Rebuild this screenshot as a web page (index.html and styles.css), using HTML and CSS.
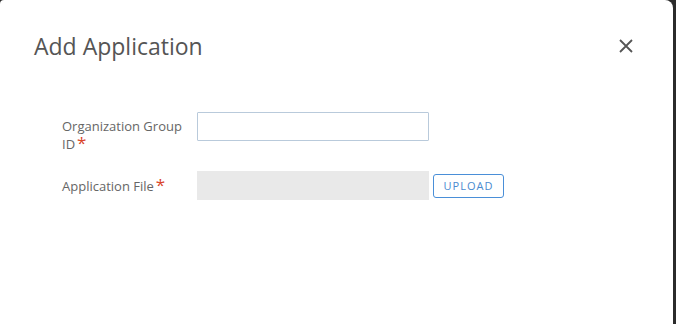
FILE: index.html
```html
<!DOCTYPE html>
<html lang="en">
<head>
    <meta charset="UTF-8">
    <title>Add Application</title>
    <link rel="stylesheet" href="styles.css">
</head>
<body>
    <div class="modal">
        <div class="modal-header">
            <h2>Add Application</h2>
            <button class="close-btn" aria-label="Close">
                <svg width="14" height="14" viewBox="0 0 14 14">
                    <path d="M1 1 L13 13 M13 1 L1 13" stroke="#555" stroke-width="1.8" fill="none"/>
                </svg>
            </button>
        </div>

        <div class="modal-body">
            <div class="form-row">
                <label class="form-label">Organization Group ID<span class="required">*</span></label>
                <input type="text" class="form-input">
            </div>
            <div class="form-row file-row">
                <label class="form-label">Application File<span class="required">*</span></label>
                <div class="file-box"></div>
                <button class="upload-btn">UPLOAD</button>
            </div>
        </div>
    </div>
</body>
</html>
```

FILE: styles.css
```css
body {
    margin: 0;
    background-color: #2b2b2b;
    font-family: 'Open Sans', 'Noto Sans', sans-serif;
}

.modal {
    width: 673px;
    height: 324px;
    background-color: #ffffff;
    border-radius: 4px 8px 0 0;
}

.modal-header {
    display: flex;
    justify-content: space-between;
    align-items: center;
    padding: 31px 40px 0 34px;
}

.modal-header h2 {
    margin: 0;
    font-size: 23px;
    font-weight: 400;
    color: #555;
    line-height: 30px;
}

.close-btn {
    background: none;
    border: none;
    padding: 0;
    width: 14px;
    height: 14px;
    display: flex;
    cursor: pointer;
}

.modal-body {
    padding: 51px 0 0 62px;
}

.form-row {
    display: flex;
    align-items: flex-start;
}

.form-label {
    width: 135px;
    font-size: 13px;
    line-height: 18px;
    color: #666;
    padding-top: 5px;
}

.required {
    color: #d9442a;
    font-size: 17px;
    line-height: 12px;
    margin-left: 2px;
}

.form-input {
    width: 232px;
    height: 29px;
    box-sizing: border-box;
    border: 1px solid #b9cadb;
    border-radius: 1px;
    margin: 0;
    padding: 0 8px;
    font-family: inherit;
}

.file-row {
    margin-top: 18px;
    align-items: center;
}

.file-row .form-label {
    padding-top: 0;
}

.file-box {
    width: 232px;
    height: 29px;
    background-color: #e9e9e9;
}

.upload-btn {
    margin-left: 4px;
    width: 71px;
    height: 24px;
    background-color: #fff;
    border: 1px solid #4a8fd8;
    border-radius: 3px;
    color: #4a8ad0;
    font-family: inherit;
    font-size: 11px;
    letter-spacing: 1px;
    padding: 0;
    cursor: pointer;
}
```
